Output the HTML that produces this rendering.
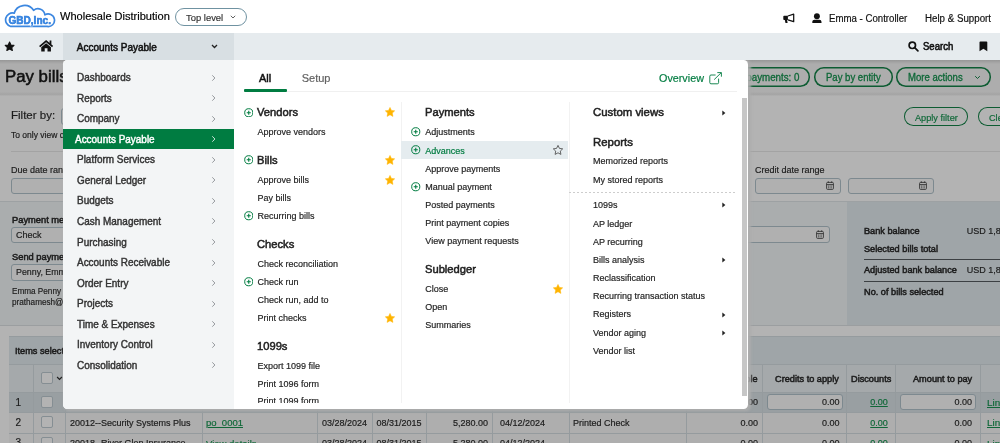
<!DOCTYPE html>
<html lang="en"><head><meta charset="utf-8"><title>Pay bills - Accounts Payable</title>
<style>
html,body{margin:0;padding:0;}
body{width:1000px;height:443px;overflow:hidden;position:relative;background:#fff;font-family:"Liberation Sans",sans-serif;color:#222;}
#app{position:absolute;left:0;top:0;width:1000px;height:443px;overflow:hidden;will-change:transform;}
#app div,#app svg,#app span.t{position:absolute;box-sizing:border-box;}
span.t{white-space:nowrap;line-height:1;}
</style></head><body><div id="app">
<div style="left:0px;top:60px;width:1000px;height:383px;background:#b3b3b3;"></div>
<div style="left:0px;top:60px;width:1000px;height:33px;background:#adadad;"></div>
<div style="left:0px;top:91.5px;width:1000px;height:4px;background:linear-gradient(rgba(160,160,160,0),#a4a4a4 45%,#a6a6a6 70%,rgba(170,170,170,0));"></div>
<div style="left:0px;top:60px;width:1000px;height:3.5px;background:linear-gradient(rgba(0,0,0,.13),rgba(0,0,0,0));"></div>
<div style="left:0px;top:201px;width:847px;height:125px;background:#aaadae;"></div>
<div style="left:847px;top:201px;width:153px;height:125px;background:#9fa5a8;"></div>
<div style="left:0px;top:325px;width:1000px;height:1px;background:#9b9ea0;"></div>
<div style="left:8.5px;top:335.7px;width:991.5px;height:108px;background:#9fa5a8;border-top:1px solid #959b9e;"></div>
<span class="t" style="top:68.83px;font-size:16px;color:#111;-webkit-text-stroke:0.5px #111;left:5.3px;transform:scaleX(1.05);transform-origin:0 50%;">Pay bills</span>
<div style="left:700px;top:67.1px;width:110px;height:19.5px;box-shadow:inset 0 0 0 1.5px #0d5c32;border-radius:9.75px;"></div>
<span class="t" style="top:72.81px;font-size:10px;color:#0f6838;-webkit-text-stroke:0.32px #0f6838;left:716px;transform:scaleX(0.975);transform-origin:0 50%;">Reject payments: 0</span>
<div style="left:814px;top:67.1px;width:78.5px;height:19.5px;box-shadow:inset 0 0 0 1.5px #0d5c32;border-radius:9.75px;"></div>
<span class="t" style="top:72.81px;font-size:10px;color:#0f6838;-webkit-text-stroke:0.32px #0f6838;left:825.7px;transform:scaleX(0.955);transform-origin:0 50%;">Pay by entity</span>
<div style="left:896.3px;top:67.1px;width:94.5px;height:19.5px;box-shadow:inset 0 0 0 1.5px #0d5c32;border-radius:9.75px;"></div>
<span class="t" style="top:72.81px;font-size:10px;color:#0f6838;-webkit-text-stroke:0.32px #0f6838;left:908px;transform:scaleX(0.955);transform-origin:0 50%;">More actions</span>
<svg style="left:973.5px;top:74.64999999999999px;" width="7" height="5" viewBox="0 0 7 5"><path d="M1.2 1.2 L3.5 3.5 L5.8 1.2" fill="none" stroke="#0d5c32" stroke-width="1"/></svg>
<div style="left:903.8px;top:107px;width:64.2px;height:18.6px;box-shadow:inset 0 0 0 1px #0d5c32;border-radius:9.3px;"></div>
<span class="t" style="top:112.51px;font-size:9.5px;color:#0f6838;-webkit-text-stroke:0.18px #0f6838;left:914.7px;transform:scaleX(0.965);transform-origin:0 50%;">Apply filter</span>
<div style="left:978px;top:107px;width:60px;height:18.6px;box-shadow:inset 0 0 0 1px #0d5c32;border-radius:9.3px;"></div>
<span class="t" style="top:112.51px;font-size:9.5px;color:#0f6838;-webkit-text-stroke:0.18px #0f6838;left:989px;transform:scaleX(0.965);transform-origin:0 50%;">Clear filter</span>
<span class="t" style="top:109.93px;font-size:11.5px;color:#1c1c1c;-webkit-text-stroke:0.18px #1c1c1c;left:11px;transform:scaleX(1.0);transform-origin:0 50%;">Filter by:</span>
<div style="left:61px;top:108px;width:130px;height:16.5px;border:1px solid #7d898f;border-radius:3px;background:#b0b0b0;"></div>
<span class="t" style="top:130.70px;font-size:8.5px;color:#1c1c1c;-webkit-text-stroke:0.18px #1c1c1c;left:11px;transform:scaleX(1.0);transform-origin:0 50%;">To only view checks, select a payment method</span>
<div style="left:11px;top:151px;width:989px;height:1px;background:#a3a3a3;"></div>
<span class="t" style="top:166.45px;font-size:9px;color:#1c1c1c;-webkit-text-stroke:0.18px #1c1c1c;left:11px;transform:scaleX(1.0);transform-origin:0 50%;">Due date range</span>
<div style="left:11px;top:177.5px;width:86px;height:16.5px;border:1px solid #7d898f;border-radius:3px;background:#b0b0b0;"></div>
<span class="t" style="top:166.45px;font-size:9px;color:#1c1c1c;-webkit-text-stroke:0.18px #1c1c1c;left:755px;transform:scaleX(1.0);transform-origin:0 50%;">Credit date range</span>
<div style="left:755px;top:177.5px;width:85.5px;height:16.5px;border:1px solid #7d898f;border-radius:3px;background:#b0b0b0;"></div>
<svg style="left:826px;top:181.3px;" width="8" height="9" viewBox="0 0 8 9"><rect x="0.6" y="1.4" width="6.8" height="7" rx="1" fill="none" stroke="#333" stroke-width="0.9"/><path d="M0.6 3.6 H7.4 M2.3 0.3 V2 M5.7 0.3 V2" stroke="#333" stroke-width="0.9"/><path d="M2 5.1 H6 M2 6.8 H6" stroke="#333" stroke-width="0.8" stroke-dasharray="1 0.6"/></svg>
<div style="left:848px;top:177.5px;width:85.5px;height:16.5px;border:1px solid #7d898f;border-radius:3px;background:#b0b0b0;"></div>
<svg style="left:919px;top:181.3px;" width="8" height="9" viewBox="0 0 8 9"><rect x="0.6" y="1.4" width="6.8" height="7" rx="1" fill="none" stroke="#333" stroke-width="0.9"/><path d="M0.6 3.6 H7.4 M2.3 0.3 V2 M5.7 0.3 V2" stroke="#333" stroke-width="0.9"/><path d="M2 5.1 H6 M2 6.8 H6" stroke="#333" stroke-width="0.8" stroke-dasharray="1 0.6"/></svg>
<div style="left:0px;top:200.5px;width:1000px;height:1px;background:#9da1a3;"></div>
<div style="left:700px;top:226.3px;width:130px;height:16.5px;border:1px solid #7d898f;border-radius:3px;background:#b0b0b0;"></div>
<svg style="left:816px;top:230px;" width="8" height="9" viewBox="0 0 8 9"><rect x="0.6" y="1.4" width="6.8" height="7" rx="1" fill="none" stroke="#333" stroke-width="0.9"/><path d="M0.6 3.6 H7.4 M2.3 0.3 V2 M5.7 0.3 V2" stroke="#333" stroke-width="0.9"/><path d="M2 5.1 H6 M2 6.8 H6" stroke="#333" stroke-width="0.8" stroke-dasharray="1 0.6"/></svg>
<span class="t" style="top:215.55px;font-size:9px;color:#1c1c1c;-webkit-text-stroke:0.5px #1c1c1c;left:11.8px;transform:scaleX(1.035);transform-origin:0 50%;">Payment method</span>
<div style="left:11px;top:226.5px;width:86px;height:16.3px;border:1px solid #7d898f;border-radius:3px;background:#b0b0b0;"></div>
<span class="t" style="top:230.51px;font-size:9.3px;color:#1c1c1c;-webkit-text-stroke:0.18px #1c1c1c;left:15.8px;transform:scaleX(0.97);transform-origin:0 50%;">Check</span>
<span class="t" style="top:253.25px;font-size:9px;color:#1c1c1c;-webkit-text-stroke:0.5px #1c1c1c;left:11.8px;transform:scaleX(1.035);transform-origin:0 50%;">Send payment notification to</span>
<div style="left:11px;top:264.3px;width:86px;height:16.7px;border:1px solid #7d898f;border-radius:3px;background:#b0b0b0;"></div>
<span class="t" style="top:268.41px;font-size:9.3px;color:#1c1c1c;-webkit-text-stroke:0.18px #1c1c1c;left:15.8px;transform:scaleX(0.95);transform-origin:0 50%;">Penny, Emma</span>
<span class="t" style="top:286.70px;font-size:8.7px;color:#1c1c1c;-webkit-text-stroke:0.18px #1c1c1c;left:11.8px;transform:scaleX(0.94);transform-origin:0 50%;">Emma Penny</span>
<span class="t" style="top:298.20px;font-size:8.7px;color:#1c1c1c;-webkit-text-stroke:0.18px #1c1c1c;left:11.8px;transform:scaleX(0.94);transform-origin:0 50%;">prathamesh@example.com</span>
<span class="t" style="top:227.45px;font-size:9px;color:#1c1c1c;-webkit-text-stroke:0.5px #1c1c1c;left:864px;transform:scaleX(1.02);transform-origin:0 50%;">Bank balance</span>
<span class="t" style="top:227.45px;font-size:9px;color:#1c1c1c;-webkit-text-stroke:0.18px #1c1c1c;left:966.8px;transform:scaleX(1.0);transform-origin:0 50%;">USD 1,845,000.00</span>
<span class="t" style="top:244.75px;font-size:9px;color:#1c1c1c;-webkit-text-stroke:0.5px #1c1c1c;left:864px;transform:scaleX(1.02);transform-origin:0 50%;">Selected bills total</span>
<div style="left:864px;top:259.2px;width:136px;height:1px;background:#3c4043;"></div>
<span class="t" style="top:266.45px;font-size:9px;color:#1c1c1c;-webkit-text-stroke:0.5px #1c1c1c;left:864px;transform:scaleX(1.02);transform-origin:0 50%;">Adjusted bank balance</span>
<span class="t" style="top:266.45px;font-size:9px;color:#1c1c1c;-webkit-text-stroke:0.18px #1c1c1c;left:966.8px;transform:scaleX(1.0);transform-origin:0 50%;">USD 1,845,000.00</span>
<div style="left:864px;top:280.6px;width:136px;height:1.4px;background:#3c4043;"></div>
<span class="t" style="top:287.75px;font-size:9px;color:#1c1c1c;-webkit-text-stroke:0.5px #1c1c1c;left:864px;transform:scaleX(1.02);transform-origin:0 50%;">No. of bills selected</span>
<div style="left:8.5px;top:365px;width:991px;height:27.3px;background:#a5a9ab;"></div>
<div style="left:8.5px;top:392.3px;width:991px;height:20.4px;background:#999fa2;"></div>
<div style="left:8.5px;top:412.7px;width:991px;height:20.3px;background:#aeaeae;"></div>
<div style="left:8.5px;top:433px;width:991px;height:10px;background:#aeaeae;"></div>
<div style="left:8.5px;top:364.1px;width:991.5px;height:1px;background:#959b9e;"></div>
<div style="left:8.5px;top:391.9px;width:991.5px;height:1px;background:#959b9e;"></div>
<div style="left:8.5px;top:411.9px;width:991.5px;height:1px;background:#959b9e;"></div>
<div style="left:8.5px;top:432.7px;width:991.5px;height:1px;background:#959b9e;"></div>
<div style="left:33px;top:365px;width:1px;height:78px;background:#959b9e;"></div>
<div style="left:65.3px;top:365px;width:1px;height:78px;background:#959b9e;"></div>
<div style="left:201.8px;top:365px;width:1px;height:78px;background:#959b9e;"></div>
<div style="left:317.3px;top:365px;width:1px;height:78px;background:#959b9e;"></div>
<div style="left:372.3px;top:365px;width:1px;height:78px;background:#959b9e;"></div>
<div style="left:426.3px;top:365px;width:1px;height:78px;background:#959b9e;"></div>
<div style="left:492.2px;top:365px;width:1px;height:78px;background:#959b9e;"></div>
<div style="left:568.6px;top:365px;width:1px;height:78px;background:#959b9e;"></div>
<div style="left:686px;top:365px;width:1px;height:78px;background:#959b9e;"></div>
<div style="left:762.3px;top:365px;width:1px;height:78px;background:#959b9e;"></div>
<div style="left:846.3px;top:365px;width:1px;height:78px;background:#959b9e;"></div>
<div style="left:895.3px;top:365px;width:1px;height:78px;background:#959b9e;"></div>
<div style="left:980px;top:365px;width:1px;height:78px;background:#959b9e;"></div>
<span class="t" style="top:346.75px;font-size:9px;color:#1c1c1c;-webkit-text-stroke:0.5px #1c1c1c;left:15.3px;transform:scaleX(1.02);transform-origin:0 50%;">Items selected: 0</span>
<div style="left:40.6px;top:372px;width:12px;height:12px;border:1px solid #858e93;border-radius:2px;background:#b3b3b3;"></div>
<svg style="left:56px;top:375.6px;" width="7" height="5" viewBox="0 0 7 5"><path d="M1.1 1 L3.5 3.4 L5.9 1" fill="none" stroke="#222" stroke-width="1.2"/></svg>
<div style="left:40.6px;top:395.8px;width:12px;height:12px;border:1px solid #858e93;border-radius:2px;background:#b3b3b3;"></div>
<div style="left:40.6px;top:416.2px;width:12px;height:12px;border:1px solid #858e93;border-radius:2px;background:#b3b3b3;"></div>
<div style="left:40.6px;top:436.6px;width:12px;height:12px;border:1px solid #858e93;border-radius:2px;background:#b3b3b3;"></div>
<span class="t" style="top:397.97px;font-size:10px;color:#1c1c1c;-webkit-text-stroke:0.18px #1c1c1c;left:15.5px;transform:scaleX(1.0);transform-origin:0 50%;">1</span>
<span class="t" style="top:418.07px;font-size:10px;color:#1c1c1c;-webkit-text-stroke:0.18px #1c1c1c;left:15.5px;transform:scaleX(1.0);transform-origin:0 50%;">2</span>
<span class="t" style="top:438.47px;font-size:10px;color:#1c1c1c;-webkit-text-stroke:0.18px #1c1c1c;left:15.5px;transform:scaleX(1.0);transform-origin:0 50%;">3</span>
<span class="t" style="top:375.25px;font-size:9px;color:#1c1c1c;-webkit-text-stroke:0.5px #1c1c1c;right:242px;transform:scaleX(1.02);transform-origin:100% 50%;">Credits available</span>
<span class="t" style="top:375.25px;font-size:9px;color:#1c1c1c;-webkit-text-stroke:0.5px #1c1c1c;left:774.5px;transform:scaleX(1.02);transform-origin:0 50%;">Credits to apply</span>
<span class="t" style="top:375.25px;font-size:9px;color:#1c1c1c;-webkit-text-stroke:0.5px #1c1c1c;left:850.6px;transform:scaleX(1.02);transform-origin:0 50%;">Discounts</span>
<span class="t" style="top:375.25px;font-size:9px;color:#1c1c1c;-webkit-text-stroke:0.5px #1c1c1c;left:912.6px;transform:scaleX(1.02);transform-origin:0 50%;">Amount to pay</span>
<div style="left:766.5px;top:394.3px;width:76px;height:16px;border:1px solid #7d898f;border-radius:3px;background:#b0b0b0;"></div>
<div style="left:899.5px;top:394.3px;width:76.5px;height:16px;border:1px solid #7d898f;border-radius:3px;background:#b0b0b0;"></div>
<span class="t" style="top:398.45px;font-size:9px;color:#1c1c1c;-webkit-text-stroke:0.18px #1c1c1c;left:70px;transform:scaleX(1.0);transform-origin:0 50%;">20011--Pac Bell</span>
<span class="t" style="top:398.21px;font-size:9.5px;color:#0f6838;-webkit-text-stroke:0.18px #0f6838;text-decoration:underline;left:206px;transform:scaleX(1.0);transform-origin:0 50%;">View details</span>
<span class="t" style="top:398.45px;font-size:9px;color:#1c1c1c;-webkit-text-stroke:0.18px #1c1c1c;left:322px;transform:scaleX(1.0);transform-origin:0 50%;">03/28/2024</span>
<span class="t" style="top:398.45px;font-size:9px;color:#1c1c1c;-webkit-text-stroke:0.18px #1c1c1c;left:376.5px;transform:scaleX(1.0);transform-origin:0 50%;">08/31/2015</span>
<span class="t" style="top:398.45px;font-size:9px;color:#1c1c1c;-webkit-text-stroke:0.18px #1c1c1c;right:512px;transform:scaleX(1.0);transform-origin:100% 50%;">5,280.00</span>
<span class="t" style="top:398.45px;font-size:9px;color:#1c1c1c;-webkit-text-stroke:0.18px #1c1c1c;left:500px;transform:scaleX(1.0);transform-origin:0 50%;">04/12/2024</span>
<span class="t" style="top:398.45px;font-size:9px;color:#1c1c1c;-webkit-text-stroke:0.18px #1c1c1c;left:573px;transform:scaleX(1.0);transform-origin:0 50%;">Printed Check</span>
<span class="t" style="top:398.45px;font-size:9px;color:#1c1c1c;-webkit-text-stroke:0.18px #1c1c1c;right:242px;transform:scaleX(1.0);transform-origin:100% 50%;">0.00</span>
<span class="t" style="top:398.45px;font-size:9px;color:#1c1c1c;-webkit-text-stroke:0.18px #1c1c1c;right:160.5px;transform:scaleX(1.0);transform-origin:100% 50%;">0.00</span>
<span class="t" style="top:398.45px;font-size:9px;color:#0f6838;-webkit-text-stroke:0.18px #0f6838;text-decoration:underline;left:879px;transform:translateX(-50%) scaleX(1.0);transform-origin:50% 50%;">0.00</span>
<span class="t" style="top:398.45px;font-size:9px;color:#1c1c1c;-webkit-text-stroke:0.18px #1c1c1c;right:28px;transform:scaleX(1.0);transform-origin:100% 50%;">0.00</span>
<span class="t" style="top:398.21px;font-size:9.5px;color:#0f6838;-webkit-text-stroke:0.18px #0f6838;text-decoration:underline;left:987px;transform:scaleX(1.04);transform-origin:0 50%;">Link</span>
<span class="t" style="top:418.55px;font-size:9px;color:#1c1c1c;-webkit-text-stroke:0.18px #1c1c1c;left:70px;transform:scaleX(1.0);transform-origin:0 50%;">20012--Security Systems Plus</span>
<span class="t" style="top:418.31px;font-size:9.5px;color:#0f6838;-webkit-text-stroke:0.18px #0f6838;text-decoration:underline;left:206px;transform:scaleX(1.0);transform-origin:0 50%;">po_0001</span>
<span class="t" style="top:418.55px;font-size:9px;color:#1c1c1c;-webkit-text-stroke:0.18px #1c1c1c;left:322px;transform:scaleX(1.0);transform-origin:0 50%;">03/28/2024</span>
<span class="t" style="top:418.55px;font-size:9px;color:#1c1c1c;-webkit-text-stroke:0.18px #1c1c1c;left:376.5px;transform:scaleX(1.0);transform-origin:0 50%;">08/31/2015</span>
<span class="t" style="top:418.55px;font-size:9px;color:#1c1c1c;-webkit-text-stroke:0.18px #1c1c1c;right:512px;transform:scaleX(1.0);transform-origin:100% 50%;">5,280.00</span>
<span class="t" style="top:418.55px;font-size:9px;color:#1c1c1c;-webkit-text-stroke:0.18px #1c1c1c;left:500px;transform:scaleX(1.0);transform-origin:0 50%;">04/12/2024</span>
<span class="t" style="top:418.55px;font-size:9px;color:#1c1c1c;-webkit-text-stroke:0.18px #1c1c1c;left:573px;transform:scaleX(1.0);transform-origin:0 50%;">Printed Check</span>
<span class="t" style="top:418.55px;font-size:9px;color:#1c1c1c;-webkit-text-stroke:0.18px #1c1c1c;right:242px;transform:scaleX(1.0);transform-origin:100% 50%;">0.00</span>
<span class="t" style="top:418.55px;font-size:9px;color:#1c1c1c;-webkit-text-stroke:0.18px #1c1c1c;right:160.5px;transform:scaleX(1.0);transform-origin:100% 50%;">0.00</span>
<span class="t" style="top:418.55px;font-size:9px;color:#0f6838;-webkit-text-stroke:0.18px #0f6838;text-decoration:underline;left:879px;transform:translateX(-50%) scaleX(1.0);transform-origin:50% 50%;">0.00</span>
<span class="t" style="top:418.55px;font-size:9px;color:#1c1c1c;-webkit-text-stroke:0.18px #1c1c1c;right:28px;transform:scaleX(1.0);transform-origin:100% 50%;">0.00</span>
<span class="t" style="top:418.31px;font-size:9.5px;color:#0f6838;-webkit-text-stroke:0.18px #0f6838;text-decoration:underline;left:987px;transform:scaleX(1.04);transform-origin:0 50%;">Link</span>
<span class="t" style="top:438.95px;font-size:9px;color:#1c1c1c;-webkit-text-stroke:0.18px #1c1c1c;left:70px;transform:scaleX(1.0);transform-origin:0 50%;">20018--River Glen Insurance</span>
<span class="t" style="top:438.71px;font-size:9.5px;color:#0f6838;-webkit-text-stroke:0.18px #0f6838;text-decoration:underline;left:206px;transform:scaleX(1.0);transform-origin:0 50%;">View details</span>
<span class="t" style="top:438.95px;font-size:9px;color:#1c1c1c;-webkit-text-stroke:0.18px #1c1c1c;left:322px;transform:scaleX(1.0);transform-origin:0 50%;">03/28/2024</span>
<span class="t" style="top:438.95px;font-size:9px;color:#1c1c1c;-webkit-text-stroke:0.18px #1c1c1c;left:376.5px;transform:scaleX(1.0);transform-origin:0 50%;">08/31/2015</span>
<span class="t" style="top:438.95px;font-size:9px;color:#1c1c1c;-webkit-text-stroke:0.18px #1c1c1c;right:512px;transform:scaleX(1.0);transform-origin:100% 50%;">5,280.00</span>
<span class="t" style="top:438.95px;font-size:9px;color:#1c1c1c;-webkit-text-stroke:0.18px #1c1c1c;left:500px;transform:scaleX(1.0);transform-origin:0 50%;">04/12/2024</span>
<span class="t" style="top:438.95px;font-size:9px;color:#1c1c1c;-webkit-text-stroke:0.18px #1c1c1c;right:242px;transform:scaleX(1.0);transform-origin:100% 50%;">0.00</span>
<span class="t" style="top:438.95px;font-size:9px;color:#1c1c1c;-webkit-text-stroke:0.18px #1c1c1c;right:160.5px;transform:scaleX(1.0);transform-origin:100% 50%;">0.00</span>
<span class="t" style="top:438.95px;font-size:9px;color:#0f6838;-webkit-text-stroke:0.18px #0f6838;text-decoration:underline;left:879px;transform:translateX(-50%) scaleX(1.0);transform-origin:50% 50%;">0.00</span>
<span class="t" style="top:438.95px;font-size:9px;color:#1c1c1c;-webkit-text-stroke:0.18px #1c1c1c;right:28px;transform:scaleX(1.0);transform-origin:100% 50%;">0.00</span>
<span class="t" style="top:438.71px;font-size:9.5px;color:#0f6838;-webkit-text-stroke:0.18px #0f6838;text-decoration:underline;left:987px;transform:scaleX(1.04);transform-origin:0 50%;">Link</span>
<div style="left:63px;top:60px;width:685px;height:349.4px;background:#fff;border-radius:4.5px;box-shadow:1.8px 1.2px 2.5px 0.6px rgba(172,172,172,.92);"></div>
<div style="left:63px;top:60px;width:171px;height:349.4px;background:#f3f5f6;border-radius:4.5px 0 0 4.5px;"></div>
<div style="left:63px;top:128.5px;width:171px;height:20.5px;background:#007c41;"></div>
<div style="left:0px;top:0px;width:1000px;height:33px;background:#fff;"></div>
<div style="left:0px;top:33px;width:1000px;height:27px;background:#e6ebee;"></div>
<div style="left:63px;top:33px;width:171px;height:27px;background:#d8dfe3;"></div>
<svg style="left:-0.9px;top:0px;" width="60" height="32" viewBox="0 0 60 32"><path d="M11.7 26.45 A6.7 6.7 0 1 1 15.2 13.2 A10.8 10.8 0 0 1 34.6 10.3 A7 7 0 0 1 45.9 14.9 A6.3 6.3 0 1 1 48 26.45 Z" fill="#fff" stroke="#3c87e0" stroke-width="1.7" stroke-linejoin="round"/><text x="9.4" y="23.55" font-family="Liberation Sans, sans-serif" font-weight="700" font-size="10" fill="#3c87e0" stroke="#fff" stroke-width="1.5" paint-order="stroke" textLength="42.6" lengthAdjust="spacingAndGlyphs">GBD,Inc.</text><text x="9.4" y="23.55" font-family="Liberation Sans, sans-serif" font-weight="700" font-size="10" fill="#3c87e0" stroke="#3c87e0" stroke-width="0.45" textLength="42.6" lengthAdjust="spacingAndGlyphs">GBD,Inc.</text></svg>
<span class="t" style="top:11.48px;font-size:11px;color:#000;-webkit-text-stroke:0.18px #000;left:60px;transform:scaleX(1.003);transform-origin:0 50%;">Wholesale Distribution</span>
<div style="left:175px;top:8px;width:72px;height:18px;border:1px solid #6f92a1;border-radius:9px;background:#fff;"></div>
<span class="t" style="top:12.81px;font-size:9.7px;color:#333;-webkit-text-stroke:0.18px #333;left:186.3px;transform:scaleX(0.972);transform-origin:0 50%;">Top level</span>
<svg style="left:230.3px;top:14.6px;" width="6" height="4.5" viewBox="0 0 6 4.5"><path d="M0.8 0.8 L3 3 L5.2 0.8" fill="none" stroke="#444" stroke-width="0.85"/></svg>
<svg style="left:783.3px;top:12.5px;" width="12" height="10.2" viewBox="0 0 12 10.2"><path d="M0.3 3.5 Q0.3 2.7 1.1 2.7 H4.9 V7 H1.1 Q0.3 7 0.3 6.2 Z M1.8 7 H4.1 L4.6 9.9 H2.5 Z" fill="#111"/><path d="M4.9 3 L10.7 1.1 V8.7 L4.9 6.8" fill="none" stroke="#111" stroke-width="1.25" stroke-linejoin="round"/></svg>
<svg style="left:812.3px;top:12.6px;" width="10" height="10.2" viewBox="0 0 10 10.2"><circle cx="4.9" cy="3.2" r="2.95" fill="#111"/><path d="M0.3 9.9 V8.7 Q0.3 6.8 2.5 6.7 H7.3 Q9.5 6.8 9.5 8.7 V9.9 Z" fill="#111"/></svg>
<span class="t" style="top:13.57px;font-size:10px;color:#111;-webkit-text-stroke:0.18px #111;left:828.5px;transform:scaleX(0.965);transform-origin:0 50%;">Emma - Controller</span>
<span class="t" style="top:13.57px;font-size:10px;color:#111;-webkit-text-stroke:0.18px #111;left:924.5px;transform:scaleX(0.973);transform-origin:0 50%;">Help &amp; Support</span>
<svg style="left:4.4px;top:41px;" width="11.2" height="10.6" viewBox="0 0 11.2 10.6"><path d="M5.6 1.1 L6.95 3.95 L10 4.35 L7.8 6.5 L8.35 9.55 L5.6 8.1 L2.85 9.55 L3.4 6.5 L1.2 4.35 L4.25 3.95 Z" fill="#111" stroke="#111" stroke-width="1.1" stroke-linejoin="round"/></svg>
<svg style="left:39px;top:40px;" width="14.2" height="11.8" viewBox="0 0 14.2 11.8"><path d="M7.1 0.1 L14.1 5.9 L13.05 7.15 L7.1 2.25 L1.15 7.15 L0.1 5.9 Z M10.6 0.4 H12.4 V4.6 L10.6 3.1 Z M2.25 7.2 L7.1 3.2 L11.95 7.2 V11.6 H8.5 V8.2 H5.7 V11.6 H2.25 Z" fill="#111"/></svg>
<span class="t" style="top:42.57px;font-size:10px;color:#111;-webkit-text-stroke:0.5px #111;left:76.8px;transform:scaleX(1.0);transform-origin:0 50%;">Accounts Payable</span>
<svg style="left:210.7px;top:43.8px;" width="7" height="5" viewBox="0 0 7 5"><path d="M1 1 L3.5 3.5 L6 1" fill="none" stroke="#222" stroke-width="1.3"/></svg>
<svg style="left:908px;top:41px;" width="11" height="11" viewBox="0 0 11 11"><circle cx="4.3" cy="4.3" r="3.2" fill="none" stroke="#111" stroke-width="1.7"/><path d="M6.7 6.7 L9.9 9.9" stroke="#111" stroke-width="1.7" stroke-linecap="round"/></svg>
<span class="t" style="top:42.47px;font-size:10px;color:#111;-webkit-text-stroke:0.55px #111;left:922.5px;transform:scaleX(0.955);transform-origin:0 50%;">Search</span>
<svg style="left:979.3px;top:41px;" width="9" height="11" viewBox="0 0 9 11"><path d="M0.5 1.3 Q0.5 0.4 1.4 0.4 H7.4 Q8.3 0.4 8.3 1.3 V10.2 L4.4 7.7 L0.5 10.2 Z" fill="#111"/></svg>
<span class="t" style="top:72.96px;font-size:10px;color:#333;-webkit-text-stroke:0.42px #333;left:76.8px;transform:scaleX(0.995);transform-origin:0 50%;">Dashboards</span>
<svg style="left:211px;top:73.5px;" width="6" height="8" viewBox="0 0 6 8"><path d="M1.3 1.3 L3.9 4 L1.3 6.7" fill="none" stroke="#7d8286" stroke-width="0.8"/></svg>
<span class="t" style="top:93.53px;font-size:10px;color:#333;-webkit-text-stroke:0.42px #333;left:76.8px;transform:scaleX(0.995);transform-origin:0 50%;">Reports</span>
<svg style="left:211px;top:94.07px;" width="6" height="8" viewBox="0 0 6 8"><path d="M1.3 1.3 L3.9 4 L1.3 6.7" fill="none" stroke="#7d8286" stroke-width="0.8"/></svg>
<span class="t" style="top:114.10px;font-size:10px;color:#333;-webkit-text-stroke:0.42px #333;left:76.8px;transform:scaleX(0.995);transform-origin:0 50%;">Company</span>
<svg style="left:211px;top:114.64px;" width="6" height="8" viewBox="0 0 6 8"><path d="M1.3 1.3 L3.9 4 L1.3 6.7" fill="none" stroke="#7d8286" stroke-width="0.8"/></svg>
<span class="t" style="top:134.68px;font-size:10px;color:#fff;-webkit-text-stroke:0.42px #fff;left:74.6px;transform:scaleX(0.995);transform-origin:0 50%;">Accounts Payable</span>
<svg style="left:211px;top:135.21px;" width="6" height="8" viewBox="0 0 6 8"><path d="M1.3 1.3 L3.9 4 L1.3 6.7" fill="none" stroke="#fff" stroke-width="0.8"/></svg>
<span class="t" style="top:155.25px;font-size:10px;color:#333;-webkit-text-stroke:0.42px #333;left:76.8px;transform:scaleX(0.995);transform-origin:0 50%;">Platform Services</span>
<svg style="left:211px;top:155.78px;" width="6" height="8" viewBox="0 0 6 8"><path d="M1.3 1.3 L3.9 4 L1.3 6.7" fill="none" stroke="#7d8286" stroke-width="0.8"/></svg>
<span class="t" style="top:175.81px;font-size:10px;color:#333;-webkit-text-stroke:0.42px #333;left:76.8px;transform:scaleX(0.995);transform-origin:0 50%;">General Ledger</span>
<svg style="left:211px;top:176.35px;" width="6" height="8" viewBox="0 0 6 8"><path d="M1.3 1.3 L3.9 4 L1.3 6.7" fill="none" stroke="#7d8286" stroke-width="0.8"/></svg>
<span class="t" style="top:196.39px;font-size:10px;color:#333;-webkit-text-stroke:0.42px #333;left:76.8px;transform:scaleX(0.995);transform-origin:0 50%;">Budgets</span>
<svg style="left:211px;top:196.92000000000002px;" width="6" height="8" viewBox="0 0 6 8"><path d="M1.3 1.3 L3.9 4 L1.3 6.7" fill="none" stroke="#7d8286" stroke-width="0.8"/></svg>
<span class="t" style="top:216.96px;font-size:10px;color:#333;-webkit-text-stroke:0.42px #333;left:76.8px;transform:scaleX(0.995);transform-origin:0 50%;">Cash Management</span>
<svg style="left:211px;top:217.49px;" width="6" height="8" viewBox="0 0 6 8"><path d="M1.3 1.3 L3.9 4 L1.3 6.7" fill="none" stroke="#7d8286" stroke-width="0.8"/></svg>
<span class="t" style="top:237.53px;font-size:10px;color:#333;-webkit-text-stroke:0.42px #333;left:76.8px;transform:scaleX(0.995);transform-origin:0 50%;">Purchasing</span>
<svg style="left:211px;top:238.06px;" width="6" height="8" viewBox="0 0 6 8"><path d="M1.3 1.3 L3.9 4 L1.3 6.7" fill="none" stroke="#7d8286" stroke-width="0.8"/></svg>
<span class="t" style="top:258.10px;font-size:10px;color:#333;-webkit-text-stroke:0.42px #333;left:76.8px;transform:scaleX(0.995);transform-origin:0 50%;">Accounts Receivable</span>
<svg style="left:211px;top:258.63px;" width="6" height="8" viewBox="0 0 6 8"><path d="M1.3 1.3 L3.9 4 L1.3 6.7" fill="none" stroke="#7d8286" stroke-width="0.8"/></svg>
<span class="t" style="top:278.67px;font-size:10px;color:#333;-webkit-text-stroke:0.42px #333;left:76.8px;transform:scaleX(0.995);transform-origin:0 50%;">Order Entry</span>
<svg style="left:211px;top:279.2px;" width="6" height="8" viewBox="0 0 6 8"><path d="M1.3 1.3 L3.9 4 L1.3 6.7" fill="none" stroke="#7d8286" stroke-width="0.8"/></svg>
<span class="t" style="top:299.24px;font-size:10px;color:#333;-webkit-text-stroke:0.42px #333;left:76.8px;transform:scaleX(0.995);transform-origin:0 50%;">Projects</span>
<svg style="left:211px;top:299.77px;" width="6" height="8" viewBox="0 0 6 8"><path d="M1.3 1.3 L3.9 4 L1.3 6.7" fill="none" stroke="#7d8286" stroke-width="0.8"/></svg>
<span class="t" style="top:319.81px;font-size:10px;color:#333;-webkit-text-stroke:0.42px #333;left:76.8px;transform:scaleX(0.995);transform-origin:0 50%;">Time &amp; Expenses</span>
<svg style="left:211px;top:320.34000000000003px;" width="6" height="8" viewBox="0 0 6 8"><path d="M1.3 1.3 L3.9 4 L1.3 6.7" fill="none" stroke="#7d8286" stroke-width="0.8"/></svg>
<span class="t" style="top:340.38px;font-size:10px;color:#333;-webkit-text-stroke:0.42px #333;left:76.8px;transform:scaleX(0.995);transform-origin:0 50%;">Inventory Control</span>
<svg style="left:211px;top:340.91px;" width="6" height="8" viewBox="0 0 6 8"><path d="M1.3 1.3 L3.9 4 L1.3 6.7" fill="none" stroke="#7d8286" stroke-width="0.8"/></svg>
<span class="t" style="top:360.95px;font-size:10px;color:#333;-webkit-text-stroke:0.42px #333;left:76.8px;transform:scaleX(0.995);transform-origin:0 50%;">Consolidation</span>
<svg style="left:211px;top:361.48px;" width="6" height="8" viewBox="0 0 6 8"><path d="M1.3 1.3 L3.9 4 L1.3 6.7" fill="none" stroke="#7d8286" stroke-width="0.8"/></svg>
<span class="t" style="top:73.18px;font-size:11px;color:#111;-webkit-text-stroke:0.5px #111;left:259px;transform:scaleX(1.0);transform-origin:0 50%;">All</span>
<span class="t" style="top:73.18px;font-size:11px;color:#606060;-webkit-text-stroke:0.18px #606060;left:301.7px;transform:scaleX(1.0);transform-origin:0 50%;">Setup</span>
<div style="left:244px;top:91.3px;width:493px;height:1px;background:#f0f0f0;"></div>
<div style="left:244px;top:89.2px;width:42.7px;height:2.5px;background:#007c41;border-radius:1px;"></div>
<span class="t" style="top:73.18px;font-size:11px;color:#007c41;-webkit-text-stroke:0.18px #007c41;left:659px;transform:scaleX(0.98);transform-origin:0 50%;">Overview</span>
<svg style="left:709px;top:71.5px;" width="13.5" height="13" viewBox="0 0 13.5 13"><path d="M9.6 6.6 V10.6 A1.2 1.2 0 0 1 8.4 11.8 H2 A1.2 1.2 0 0 1 0.8 10.6 V4.2 A1.2 1.2 0 0 1 2 3 H6.6" fill="none" stroke="#007c41" stroke-width="0.9"/><path d="M5.2 7.6 L12.2 0.7 M8.3 0.6 H12.4 V4.7" fill="none" stroke="#007c41" stroke-width="0.9"/></svg>
<div style="left:400.5px;top:102px;width:1px;height:301px;background:#f2f2f2;"></div>
<div style="left:568.5px;top:102px;width:1px;height:301px;background:#f2f2f2;"></div>
<div style="left:401.3px;top:141.3px;width:166.8px;height:18px;background:#e5ecef;"></div>
<span class="t" style="top:107.48px;font-size:11px;color:#222;-webkit-text-stroke:0.5px #222;left:257.3px;transform:scaleX(1.015);transform-origin:0 50%;">Vendors</span>
<svg style="left:243.7px;top:107.6px;" width="9.5" height="9.5" viewBox="0 0 9.5 9.5"><circle cx="4.75" cy="4.75" r="4.05" fill="none" stroke="#007c41" stroke-width="1"/><path d="M4.75 2.7 V6.8 M2.7 4.75 H6.8" stroke="#007c41" stroke-width="1.1"/></svg>
<svg style="left:385.3px;top:107.3px;" width="10" height="10" viewBox="0 0 10 10"><path d="M5 0.4 L6.45 3.4 L9.7 3.85 L7.3 6.1 L7.9 9.4 L5 7.8 L2.1 9.4 L2.7 6.1 L0.3 3.85 L3.55 3.4 Z" fill="#ffb400" stroke="#ffb400" stroke-width="0.5" stroke-linejoin="round"/></svg>
<span class="t" style="top:127.95px;font-size:9px;color:#242424;-webkit-text-stroke:0.18px #242424;left:257.5px;transform:scaleX(1.0);transform-origin:0 50%;">Approve vendors</span>
<span class="t" style="top:154.98px;font-size:11px;color:#222;-webkit-text-stroke:0.5px #222;left:257.3px;transform:scaleX(1.015);transform-origin:0 50%;">Bills</span>
<svg style="left:243.7px;top:155.1px;" width="9.5" height="9.5" viewBox="0 0 9.5 9.5"><circle cx="4.75" cy="4.75" r="4.05" fill="none" stroke="#007c41" stroke-width="1"/><path d="M4.75 2.7 V6.8 M2.7 4.75 H6.8" stroke="#007c41" stroke-width="1.1"/></svg>
<svg style="left:385.3px;top:154.8px;" width="10" height="10" viewBox="0 0 10 10"><path d="M5 0.4 L6.45 3.4 L9.7 3.85 L7.3 6.1 L7.9 9.4 L5 7.8 L2.1 9.4 L2.7 6.1 L0.3 3.85 L3.55 3.4 Z" fill="#ffb400" stroke="#ffb400" stroke-width="0.5" stroke-linejoin="round"/></svg>
<span class="t" style="top:175.95px;font-size:9px;color:#242424;-webkit-text-stroke:0.18px #242424;left:257.5px;transform:scaleX(1.0);transform-origin:0 50%;">Approve bills</span>
<svg style="left:385.3px;top:174.8px;" width="10" height="10" viewBox="0 0 10 10"><path d="M5 0.4 L6.45 3.4 L9.7 3.85 L7.3 6.1 L7.9 9.4 L5 7.8 L2.1 9.4 L2.7 6.1 L0.3 3.85 L3.55 3.4 Z" fill="#ffb400" stroke="#ffb400" stroke-width="0.5" stroke-linejoin="round"/></svg>
<span class="t" style="top:193.95px;font-size:9px;color:#242424;-webkit-text-stroke:0.18px #242424;left:257.5px;transform:scaleX(1.0);transform-origin:0 50%;">Pay bills</span>
<span class="t" style="top:212.20px;font-size:9px;color:#242424;-webkit-text-stroke:0.18px #242424;left:257.5px;transform:scaleX(1.0);transform-origin:0 50%;">Recurring bills</span>
<svg style="left:243.7px;top:211.35px;" width="9.5" height="9.5" viewBox="0 0 9.5 9.5"><circle cx="4.75" cy="4.75" r="4.05" fill="none" stroke="#007c41" stroke-width="1"/><path d="M4.75 2.7 V6.8 M2.7 4.75 H6.8" stroke="#007c41" stroke-width="1.1"/></svg>
<span class="t" style="top:238.98px;font-size:11px;color:#222;-webkit-text-stroke:0.5px #222;left:257.3px;transform:scaleX(1.015);transform-origin:0 50%;">Checks</span>
<span class="t" style="top:259.70px;font-size:9px;color:#242424;-webkit-text-stroke:0.18px #242424;left:257.5px;transform:scaleX(1.0);transform-origin:0 50%;">Check reconciliation</span>
<span class="t" style="top:277.95px;font-size:9px;color:#242424;-webkit-text-stroke:0.18px #242424;left:257.5px;transform:scaleX(1.0);transform-origin:0 50%;">Check run</span>
<svg style="left:243.7px;top:277.1px;" width="9.5" height="9.5" viewBox="0 0 9.5 9.5"><circle cx="4.75" cy="4.75" r="4.05" fill="none" stroke="#007c41" stroke-width="1"/><path d="M4.75 2.7 V6.8 M2.7 4.75 H6.8" stroke="#007c41" stroke-width="1.1"/></svg>
<span class="t" style="top:296.20px;font-size:9px;color:#242424;-webkit-text-stroke:0.18px #242424;left:257.5px;transform:scaleX(1.0);transform-origin:0 50%;">Check run, add to</span>
<span class="t" style="top:314.45px;font-size:9px;color:#242424;-webkit-text-stroke:0.18px #242424;left:257.5px;transform:scaleX(1.0);transform-origin:0 50%;">Print checks</span>
<svg style="left:385.3px;top:313.3px;" width="10" height="10" viewBox="0 0 10 10"><path d="M5 0.4 L6.45 3.4 L9.7 3.85 L7.3 6.1 L7.9 9.4 L5 7.8 L2.1 9.4 L2.7 6.1 L0.3 3.85 L3.55 3.4 Z" fill="#ffb400" stroke="#ffb400" stroke-width="0.5" stroke-linejoin="round"/></svg>
<span class="t" style="top:341.23px;font-size:11px;color:#222;-webkit-text-stroke:0.5px #222;left:257.3px;transform:scaleX(1.015);transform-origin:0 50%;">1099s</span>
<span class="t" style="top:361.70px;font-size:9px;color:#242424;-webkit-text-stroke:0.18px #242424;left:257.5px;transform:scaleX(1.0);transform-origin:0 50%;">Export 1099 file</span>
<span class="t" style="top:380.20px;font-size:9px;color:#242424;-webkit-text-stroke:0.18px #242424;left:257.5px;transform:scaleX(1.0);transform-origin:0 50%;">Print 1096 form</span>
<div style="left:240px;top:392px;width:160px;height:11.3px;overflow:hidden;">
<span class="t" style="top:5.25px;font-size:9px;color:#242424;-webkit-text-stroke:0.18px #242424;left:17.5px;transform:scaleX(1.0);transform-origin:0 50%;">Print 1099 form</span>
</div>
<span class="t" style="top:107.48px;font-size:11px;color:#222;-webkit-text-stroke:0.5px #222;left:425.3px;transform:scaleX(1.015);transform-origin:0 50%;">Payments</span>
<span class="t" style="top:127.95px;font-size:9px;color:#242424;-webkit-text-stroke:0.18px #242424;left:425.3px;transform:scaleX(1.0);transform-origin:0 50%;">Adjustments</span>
<svg style="left:411.4px;top:127.1px;" width="9.5" height="9.5" viewBox="0 0 9.5 9.5"><circle cx="4.75" cy="4.75" r="4.05" fill="none" stroke="#007c41" stroke-width="1"/><path d="M4.75 2.7 V6.8 M2.7 4.75 H6.8" stroke="#007c41" stroke-width="1.1"/></svg>
<span class="t" style="top:146.80px;font-size:9px;color:#007c41;-webkit-text-stroke:0.18px #007c41;left:425.3px;transform:scaleX(1.0);transform-origin:0 50%;">Advances</span>
<svg style="left:411.4px;top:145.35px;" width="9.5" height="9.5" viewBox="0 0 9.5 9.5"><circle cx="4.75" cy="4.75" r="4.05" fill="none" stroke="#007c41" stroke-width="1"/><path d="M4.75 2.7 V6.8 M2.7 4.75 H6.8" stroke="#007c41" stroke-width="1.1"/></svg>
<svg style="left:553px;top:145.05px;" width="10" height="10" viewBox="0 0 10 10"><path d="M5 0.4 L6.45 3.4 L9.7 3.85 L7.3 6.1 L7.9 9.4 L5 7.8 L2.1 9.4 L2.7 6.1 L0.3 3.85 L3.55 3.4 Z" fill="none" stroke="#444" stroke-width="0.8" stroke-linejoin="round"/></svg>
<span class="t" style="top:164.70px;font-size:9px;color:#242424;-webkit-text-stroke:0.18px #242424;left:425.3px;transform:scaleX(1.0);transform-origin:0 50%;">Approve payments</span>
<span class="t" style="top:182.95px;font-size:9px;color:#242424;-webkit-text-stroke:0.18px #242424;left:425.3px;transform:scaleX(1.0);transform-origin:0 50%;">Manual payment</span>
<svg style="left:411.4px;top:182.1px;" width="9.5" height="9.5" viewBox="0 0 9.5 9.5"><circle cx="4.75" cy="4.75" r="4.05" fill="none" stroke="#007c41" stroke-width="1"/><path d="M4.75 2.7 V6.8 M2.7 4.75 H6.8" stroke="#007c41" stroke-width="1.1"/></svg>
<span class="t" style="top:200.95px;font-size:9px;color:#242424;-webkit-text-stroke:0.18px #242424;left:425.3px;transform:scaleX(1.0);transform-origin:0 50%;">Posted payments</span>
<span class="t" style="top:219.20px;font-size:9px;color:#242424;-webkit-text-stroke:0.18px #242424;left:425.3px;transform:scaleX(1.0);transform-origin:0 50%;">Print payment copies</span>
<span class="t" style="top:237.20px;font-size:9px;color:#242424;-webkit-text-stroke:0.18px #242424;left:425.3px;transform:scaleX(1.0);transform-origin:0 50%;">View payment requests</span>
<span class="t" style="top:263.98px;font-size:11px;color:#222;-webkit-text-stroke:0.5px #222;left:425.3px;transform:scaleX(1.015);transform-origin:0 50%;">Subledger</span>
<span class="t" style="top:284.95px;font-size:9px;color:#242424;-webkit-text-stroke:0.18px #242424;left:425.3px;transform:scaleX(1.0);transform-origin:0 50%;">Close</span>
<svg style="left:553px;top:283.8px;" width="10" height="10" viewBox="0 0 10 10"><path d="M5 0.4 L6.45 3.4 L9.7 3.85 L7.3 6.1 L7.9 9.4 L5 7.8 L2.1 9.4 L2.7 6.1 L0.3 3.85 L3.55 3.4 Z" fill="#ffb400" stroke="#ffb400" stroke-width="0.5" stroke-linejoin="round"/></svg>
<span class="t" style="top:302.95px;font-size:9px;color:#242424;-webkit-text-stroke:0.18px #242424;left:425.3px;transform:scaleX(1.0);transform-origin:0 50%;">Open</span>
<span class="t" style="top:320.95px;font-size:9px;color:#242424;-webkit-text-stroke:0.18px #242424;left:425.3px;transform:scaleX(1.0);transform-origin:0 50%;">Summaries</span>
<span class="t" style="top:107.48px;font-size:11px;color:#222;-webkit-text-stroke:0.5px #222;left:593px;transform:scaleX(1.035);transform-origin:0 50%;">Custom views</span>
<svg style="left:721.8px;top:109.5px;" width="4" height="6" viewBox="0 0 4 6"><path d="M0.3 0.4 L3.4 3 L0.3 5.6 Z" fill="#222"/></svg>
<span class="t" style="top:136.73px;font-size:11px;color:#222;-webkit-text-stroke:0.5px #222;left:593px;transform:scaleX(1.035);transform-origin:0 50%;">Reports</span>
<span class="t" style="top:157.20px;font-size:9px;color:#242424;-webkit-text-stroke:0.18px #242424;left:593px;transform:scaleX(1.0);transform-origin:0 50%;">Memorized reports</span>
<span class="t" style="top:175.95px;font-size:9px;color:#242424;-webkit-text-stroke:0.18px #242424;left:593px;transform:scaleX(1.0);transform-origin:0 50%;">My stored reports</span>
<span class="t" style="top:200.95px;font-size:9px;color:#242424;-webkit-text-stroke:0.18px #242424;left:593px;transform:scaleX(1.0);transform-origin:0 50%;">1099s</span>
<svg style="left:721.8px;top:202px;" width="4" height="6" viewBox="0 0 4 6"><path d="M0.3 0.4 L3.4 3 L0.3 5.6 Z" fill="#222"/></svg>
<span class="t" style="top:219.95px;font-size:9px;color:#242424;-webkit-text-stroke:0.18px #242424;left:593px;transform:scaleX(1.0);transform-origin:0 50%;">AP ledger</span>
<span class="t" style="top:237.95px;font-size:9px;color:#242424;-webkit-text-stroke:0.18px #242424;left:593px;transform:scaleX(1.0);transform-origin:0 50%;">AP recurring</span>
<span class="t" style="top:255.95px;font-size:9px;color:#242424;-webkit-text-stroke:0.18px #242424;left:593px;transform:scaleX(1.0);transform-origin:0 50%;">Bills analysis</span>
<svg style="left:721.8px;top:257px;" width="4" height="6" viewBox="0 0 4 6"><path d="M0.3 0.4 L3.4 3 L0.3 5.6 Z" fill="#222"/></svg>
<span class="t" style="top:274.45px;font-size:9px;color:#242424;-webkit-text-stroke:0.18px #242424;left:593px;transform:scaleX(1.0);transform-origin:0 50%;">Reclassification</span>
<span class="t" style="top:292.45px;font-size:9px;color:#242424;-webkit-text-stroke:0.18px #242424;left:593px;transform:scaleX(1.0);transform-origin:0 50%;">Recurring transaction status</span>
<span class="t" style="top:310.45px;font-size:9px;color:#242424;-webkit-text-stroke:0.18px #242424;left:593px;transform:scaleX(1.0);transform-origin:0 50%;">Registers</span>
<svg style="left:721.8px;top:311.5px;" width="4" height="6" viewBox="0 0 4 6"><path d="M0.3 0.4 L3.4 3 L0.3 5.6 Z" fill="#222"/></svg>
<span class="t" style="top:328.70px;font-size:9px;color:#242424;-webkit-text-stroke:0.18px #242424;left:593px;transform:scaleX(1.0);transform-origin:0 50%;">Vendor aging</span>
<svg style="left:721.8px;top:329.75px;" width="4" height="6" viewBox="0 0 4 6"><path d="M0.3 0.4 L3.4 3 L0.3 5.6 Z" fill="#222"/></svg>
<span class="t" style="top:346.95px;font-size:9px;color:#242424;-webkit-text-stroke:0.18px #242424;left:593px;transform:scaleX(1.0);transform-origin:0 50%;">Vendor list</span>
<div style="left:569px;top:191.5px;width:168px;height:1px;background:repeating-linear-gradient(90deg,#cdcdcd 0,#cdcdcd 2px,transparent 2px,transparent 4px);"></div>
<div style="left:742px;top:98px;width:5px;height:297.7px;background:#c6c6c6;"></div>
</div></body></html>
